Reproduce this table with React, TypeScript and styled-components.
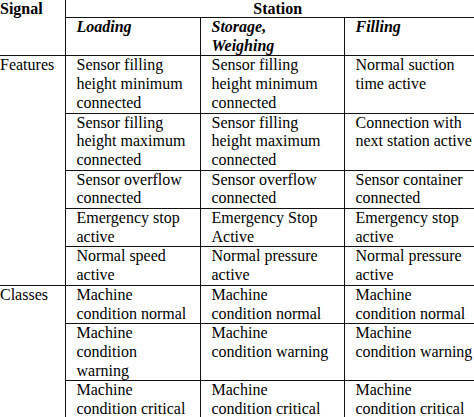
import styled, { createGlobalStyle } from "styled-components";
import { Fragment } from "react";

const GlobalStyle = createGlobalStyle`
  html, body {
    margin: 0;
    padding: 0;
    background: #fff;
    overflow: hidden;
  }
  body {
    font-family: "Liberation Serif", "Times New Roman", serif;
    color: #000;
  }
`;

const StyledTable = styled.table`
  border-collapse: collapse;
  table-layout: fixed;
  width: 490px;
  font-size: 16px;
  line-height: 18.7px;
`;

const StyledCol = styled.col<{ $width: number }>`
  width: ${(p) => p.$width}px;
`;

const StyledCell = styled.td`
  vertical-align: top;
  text-align: left;
  padding: 0 6px 0 11px;
  border: 1px solid #111;
  white-space: nowrap;
`;

const StyledLabelCell = styled.td`
  vertical-align: top;
  text-align: left;
  padding: 0;
  border-top: 1px solid #111;
  border-bottom: 1px solid #111;
  border-right: 1px solid #111;
  white-space: nowrap;
`;

const StyledSignalHead = styled.th`
  vertical-align: top;
  text-align: left;
  font-weight: 700;
  padding: 0;
  line-height: 17px;
  border-right: 1px solid #111;
  border-bottom: 1px solid #111;
`;

const StyledStationHead = styled.th`
  font-weight: 700;
  text-align: center;
  padding: 0;
  line-height: 17px;
  border-bottom: 1px solid #111;
  border-left: 1px solid #111;
`;

const StyledSubHead = styled.th`
  vertical-align: top;
  text-align: left;
  font-weight: 700;
  font-style: italic;
  padding: 0 6px 0 11px;
  border: 1px solid #111;
  white-space: nowrap;
`;

type Row = { label?: string; span?: number; cells: string[][] };

const rows: Row[] = [
  {
    label: "Features",
    span: 5,
    cells: [
      ["Sensor filling", "height minimum", "connected"],
      ["Sensor filling", "height minimum", "connected"],
      ["Normal suction", "time active"],
    ],
  },
  {
    cells: [
      ["Sensor filling", "height maximum", "connected"],
      ["Sensor filling", "height maximum", "connected"],
      ["Connection with", "next station active"],
    ],
  },
  {
    cells: [
      ["Sensor overflow", "connected"],
      ["Sensor overflow", "connected"],
      ["Sensor container", "connected"],
    ],
  },
  {
    cells: [
      ["Emergency stop", "active"],
      ["Emergency Stop", "Active"],
      ["Emergency stop", "active"],
    ],
  },
  {
    cells: [
      ["Normal speed", "active"],
      ["Normal pressure", "active"],
      ["Normal pressure", "active"],
    ],
  },
  {
    label: "Classes",
    span: 3,
    cells: [
      ["Machine", "condition normal"],
      ["Machine", "condition normal"],
      ["Machine", "condition normal"],
    ],
  },
  {
    cells: [
      ["Machine", "condition", "warning"],
      ["Machine", "condition warning"],
      ["Machine", "condition warning"],
    ],
  },
  {
    cells: [
      ["Machine", "condition critical"],
      ["Machine", "condition critical"],
      ["Machine", "condition critical"],
    ],
  },
];

function Lines(props: { lines: string[] }) {
  return (
    <>
      {props.lines.map((line, i) => (
        <Fragment key={i}>
          {i > 0 && <br />}
          {line}
        </Fragment>
      ))}
    </>
  );
}

export default function App() {
  return (
    <>
      <GlobalStyle />
      <StyledTable>
        <colgroup>
          <StyledCol $width={65} />
          <StyledCol $width={135} />
          <StyledCol $width={144} />
          <StyledCol $width={146} />
        </colgroup>
        <thead>
          <tr>
            <StyledSignalHead rowSpan={2}>Signal</StyledSignalHead>
            <StyledStationHead colSpan={3}>Station</StyledStationHead>
          </tr>
          <tr>
            <StyledSubHead>Loading</StyledSubHead>
            <StyledSubHead>
              <Lines lines={["Storage,", "Weighing"]} />
            </StyledSubHead>
            <StyledSubHead>Filling</StyledSubHead>
          </tr>
        </thead>
        <tbody>
          {rows.map((row, index) => (
            <tr key={index}>
              {row.label && (
                <StyledLabelCell rowSpan={row.span}>{row.label}</StyledLabelCell>
              )}
              {row.cells.map((cell, i) => (
                <StyledCell key={i}>
                  <Lines lines={cell} />
                </StyledCell>
              ))}
            </tr>
          ))}
        </tbody>
      </StyledTable>
    </>
  );
}
